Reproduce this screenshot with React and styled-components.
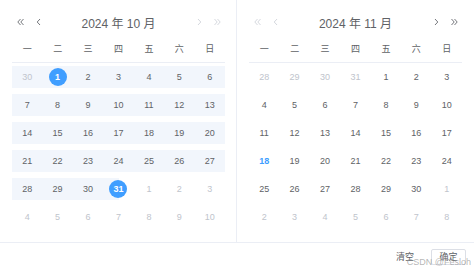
import styled, { createGlobalStyle } from 'styled-components'

const GlobalStyle = createGlobalStyle`
  html, body {
    margin: 0;
    padding: 0;
    background: #fff;
  }
  body {
    font-family: "Liberation Sans", "Noto Sans CJK SC", sans-serif;
  }
`

const Picker = styled.div`
  position: relative;
  width: 474px;
  height: 272px;
  display: flex;
  flex-direction: column;
  background: #fff;
  color: #606266;
`

const Panels = styled.div`
  display: grid;
  grid-template-columns: 237px 237px;
`

const Panel = styled.div`
  padding: 10px 0 11px;
  border-left: ${p => (p.$divided ? '1px solid #ebeef5' : 'none')};
  margin-left: ${p => (p.$divided ? '-1px' : '0')};
`

const Header = styled.div`
  height: 24px;
  display: flex;
  align-items: center;
  padding: 0 15px;
`

const ArrowGroup = styled.div`
  display: flex;
  gap: 8px;
`

const ArrowButton = styled.span`
  width: 10px;
  height: 10px;
  display: flex;
  align-items: center;
  justify-content: center;
  color: ${p => (p.$disabled ? '#d5d8de' : '#76787d')};
`

const Title = styled.div`
  flex: 1;
  text-align: center;
  font-size: 12px;
  color: #606266;
`

const Table = styled.div`
  margin: 0 12px;
`

const WeekRow = styled.div`
  display: grid;
  grid-template-columns: repeat(7, 1fr);
  height: 28px;
  border-bottom: 1px solid #ebeef5;
`

const WeekDay = styled.div`
  display: flex;
  align-items: center;
  justify-content: center;
  font-size: 9px;
  color: #606266;
`

const DateGrid = styled.div`
  display: grid;
  grid-template-columns: repeat(7, 1fr);
  grid-auto-rows: 28px;
`

const bandBg = {
  full: '#f2f6fc',
  half: 'linear-gradient(to right, #f2f6fc 50%, transparent 50%)',
  none: 'transparent',
}

const Cell = styled.div`
  padding-top: 3px;
`

const Band = styled.div`
  height: 22px;
  display: flex;
  align-items: center;
  justify-content: center;
  background: ${p => bandBg[p.$band || 'none']};
`

const Day = styled.span`
  width: 18px;
  height: 18px;
  border-radius: 50%;
  display: flex;
  align-items: center;
  justify-content: center;
  font-size: 9px;
  background: ${p => (p.$selected ? '#409eff' : 'transparent')};
  color: ${p =>
    p.$selected ? '#fff' : p.$today ? '#409eff' : p.$muted ? '#c0c4cc' : '#606266'};
  font-weight: ${p => (p.$selected || p.$today ? 700 : 400)};
`

const Footer = styled.div`
  flex: 1;
  border-top: 1px solid #ebeef5;
  display: flex;
  align-items: center;
  justify-content: flex-end;
  gap: 17px;
  padding: 0 8px 2px 0;
`

const TextButton = styled.span`
  font-size: 9px;
  color: #606266;
`

const PlainButton = styled.span`
  width: 33px;
  height: 14px;
  border: 1px solid #dcdfe6;
  border-radius: 2px;
  display: flex;
  align-items: center;
  justify-content: center;
  font-size: 9px;
  color: #606266;
`

const Watermark = styled.span`
  position: absolute;
  right: 3px;
  bottom: 5px;
  font-size: 9px;
  color: rgba(150, 150, 150, 0.7);
  pointer-events: none;
`

const DoubleLeft = () => (
  <svg width="7" height="8" viewBox="0 0 7 8" fill="none" stroke="currentColor" strokeWidth="1">
    <path d="M3.5 1 L0.8 4 L3.5 7 M6.5 1 L3.8 4 L6.5 7" />
  </svg>
)
const Left = () => (
  <svg width="5" height="8" viewBox="0 0 5 8" fill="none" stroke="currentColor" strokeWidth="1">
    <path d="M4 1 L1.2 4 L4 7" />
  </svg>
)
const Right = () => (
  <svg width="5" height="8" viewBox="0 0 5 8" fill="none" stroke="currentColor" strokeWidth="1">
    <path d="M1 1 L3.8 4 L1 7" />
  </svg>
)
const DoubleRight = () => (
  <svg width="7" height="8" viewBox="0 0 7 8" fill="none" stroke="currentColor" strokeWidth="1">
    <path d="M0.5 1 L3.2 4 L0.5 7 M3.5 1 L6.2 4 L3.5 7" />
  </svg>
)

const weekDays = ['一', '二', '三', '四', '五', '六', '日']

// each day: [label, muted, selected, today, band]
const october = [
  [30, 1], [1, 0, 1, 0, 'full'], [2], [3], [4], [5], [6],
  [7], [8], [9], [10], [11], [12], [13],
  [14], [15], [16], [17], [18], [19], [20],
  [21], [22], [23], [24], [25], [26], [27],
  [28], [29], [30], [31, 0, 1, 0, 'half'], [1, 1], [2, 1], [3, 1],
  [4, 1], [5, 1], [6, 1], [7, 1], [8, 1], [9, 1], [10, 1],
].map((d, i) => {
  const row = Math.floor(i / 7)
  let band = d[4]
  if (!band && row < 4) band = 'full'
  if (!band && row === 4 && i % 7 < 3) band = 'full'
  return { label: d[0], muted: !!d[1], selected: !!d[2], today: !!d[3], band }
})

const november = [
  [28, 1], [29, 1], [30, 1], [31, 1], [1], [2], [3],
  [4], [5], [6], [7], [8], [9], [10],
  [11], [12], [13], [14], [15], [16], [17],
  [18, 0, 0, 1], [19], [20], [21], [22], [23], [24],
  [25], [26], [27], [28], [29], [30], [1, 1],
  [2, 1], [3, 1], [4, 1], [5, 1], [6, 1], [7, 1], [8, 1],
].map(d => ({ label: d[0], muted: !!d[1], selected: !!d[2], today: !!d[3] }))

const Month = ({ title, days, prevDisabled, nextDisabled, divided }) => (
  <Panel $divided={divided}>
    <Header>
      <ArrowGroup>
        <ArrowButton $disabled={prevDisabled}><DoubleLeft /></ArrowButton>
        <ArrowButton $disabled={prevDisabled}><Left /></ArrowButton>
      </ArrowGroup>
      <Title>{title}</Title>
      <ArrowGroup>
        <ArrowButton $disabled={nextDisabled}><Right /></ArrowButton>
        <ArrowButton $disabled={nextDisabled}><DoubleRight /></ArrowButton>
      </ArrowGroup>
    </Header>
    <Table>
      <WeekRow>
        {weekDays.map(w => <WeekDay key={w}>{w}</WeekDay>)}
      </WeekRow>
      <DateGrid>
        {days.map((d, i) => (
          <Cell key={i}>
            <Band $band={d.band}>
              <Day $muted={d.muted} $selected={d.selected} $today={d.today}>{d.label}</Day>
            </Band>
          </Cell>
        ))}
      </DateGrid>
    </Table>
  </Panel>
)

export default function App() {
  return (
    <>
      <GlobalStyle />
      <Picker>
        <Panels>
          <Month title="2024 年 10 月" days={october} nextDisabled />
          <Month title="2024 年 11 月" days={november} prevDisabled divided />
        </Panels>
        <Footer>
          <TextButton>清空</TextButton>
          <PlainButton>确定</PlainButton>
        </Footer>
        <Watermark>CSDN @Fesloh</Watermark>
      </Picker>
    </>
  )
}
